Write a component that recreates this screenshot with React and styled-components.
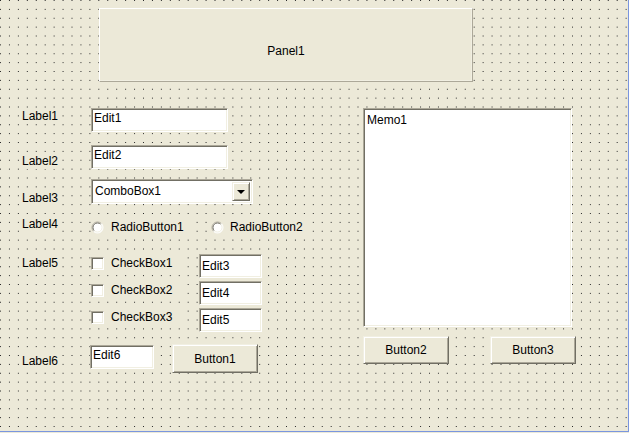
import React from "react";
import styled, { createGlobalStyle } from "styled-components";

const face = "#ECE9D8";
const light = "#F1EFE2";
const shadow = "#ACA899";
const darkShadow = "#716F64";

const GlobalStyle = createGlobalStyle`
  html, body {
    margin: 0;
    padding: 0;
    background: ${face};
  }
  body {
    font-family: "Liberation Sans", Arial, sans-serif;
    font-size: 12px;
    color: #000;
  }
`;

// design surface of the form, with the designer's dot grid
const Form = styled.div`
  display: flex;
  flex-direction: column;
  box-sizing: border-box;
  width: 629px;
  height: 432px;
  padding-top: 8px;
  border-right: 1px solid #7a96df;
  border-bottom: 1px solid #7a96df;
  background-color: ${face};
  background-image: radial-gradient(circle, #2a2a2a 0 0.55px, transparent 0.95px);
  background-size: 8.94px 8.88px;
  background-position: -3.97px -3.94px;
  overflow: hidden;
`;

const Panel = styled.div`
  display: flex;
  align-items: center;
  justify-content: center;
  box-sizing: border-box;
  width: 374px;
  height: 74px;
  margin-left: 99px;
  padding-top: 12px;
  background: ${face};
  border: 1px solid;
  border-color: #fff ${shadow} ${shadow} #fff;
  box-shadow: inset -1px -1px ${light};
`;

const Body = styled.div`
  display: flex;
  margin-top: 26px;
`;

const LeftColumn = styled.div`
  display: flex;
  flex-direction: column;
  width: 363px;
`;

const RightColumn = styled.div`
  display: flex;
  flex-direction: column;
  gap: 9px;
`;

const FieldRow = styled.div`
  display: grid;
  grid-template-columns: 91px auto;
  align-items: start;
  margin-top: ${p => p.$gap || 0}px;
`;

const Label = styled.span`
  justify-self: start;
  margin: ${p => p.$offset || 0}px 0 0 22px;
  background: ${face};
  line-height: 15px;
  white-space: nowrap;
`;

const Edit = styled.div`
  box-sizing: border-box;
  width: ${p => p.$w}px;
  height: 24px;
  padding: ${p => p.$pad ?? 2}px 1px 0 2px;
  background: #fff;
  border: 1px solid;
  border-color: ${shadow} #fff #fff ${shadow};
  box-shadow: inset 1px 1px ${darkShadow}, inset -1px -1px ${light};
  line-height: 15px;
  white-space: nowrap;
  overflow: hidden;
`;

const Memo = styled(Edit)`
  width: 209px;
  height: 219px;
  padding: 4px 3px;
`;

const Combo = styled(Edit)`
  display: flex;
  justify-content: space-between;
  height: 25px;
  padding: 2px 2px 2px 3px;
  line-height: 19px;
`;

const DropButton = styled.div`
  width: 18px;
  box-sizing: border-box;
  display: flex;
  align-items: center;
  justify-content: center;
  background: ${face};
  border: 1px solid;
  border-color: ${light} ${darkShadow} ${darkShadow} ${light};
  box-shadow: inset 1px 1px #fff, inset -1px -1px ${shadow};

  &::after {
    content: "";
    border-left: 4px solid transparent;
    border-right: 4px solid transparent;
    border-top: 4px solid #000;
    margin-top: 1px;
  }
`;

const Button = styled.div`
  display: flex;
  align-items: center;
  justify-content: center;
  box-sizing: border-box;
  width: 86px;
  height: ${p => p.$h || 28}px;
  background: ${face};
  border: 1px solid;
  border-color: ${light} ${darkShadow} ${darkShadow} ${light};
  box-shadow: inset 1px 1px #fff, inset -1px -1px ${shadow};
`;

const ButtonRow = styled.div`
  display: flex;
  gap: 41px;
`;

const RadioGroup = styled.div`
  display: grid;
  grid-template-columns: 120px auto;
  margin-top: 3px;
`;

const Choice = styled.div`
  display: flex;
  align-items: center;
  gap: ${p => p.$gap || 7}px;
  height: 15px;
  justify-self: start;
  padding-right: 8px;
  background: ${face};
  line-height: 15px;
  white-space: nowrap;
`;

const CheckGrid = styled.div`
  display: grid;
  grid-template-columns: 108px 63px;
  grid-auto-rows: 24px;
  row-gap: 3px;
  align-items: start;
`;

const CheckChoice = styled(Choice)`
  margin-top: 2px;
`;

const Box = styled.span`
  width: 13px;
  height: 13px;
  box-sizing: border-box;
  flex: none;
  background: #fff;
  border: 1px solid;
  border-color: ${shadow} #fff #fff ${shadow};
  box-shadow: inset 1px 1px ${darkShadow}, inset -1px -1px ${light};
`;

const BottomControls = styled.div`
  display: flex;
  align-items: flex-start;
  gap: 18px;

  & > ${Edit} {
    margin: 1px 0 0 -1px;
  }
`;

function RadioCircle() {
  return (
    <svg width="13" height="13" viewBox="0 0 13 13" style={{ flex: "none" }}>
      <circle cx="6.5" cy="6.5" r="5.5" fill="#fff" />
      <path d="M2.6 10.4 A5.5 5.5 0 0 1 10.4 2.6" fill="none" stroke={shadow} />
      <path d="M3.3 9.7 A4.5 4.5 0 0 1 9.7 3.3" fill="none" stroke={darkShadow} />
      <path d="M10.4 2.6 A5.5 5.5 0 0 1 2.6 10.4" fill="none" stroke="#fff" />
      <path d="M9.7 3.3 A4.5 4.5 0 0 1 3.3 9.7" fill="none" stroke={light} />
    </svg>
  );
}

const checks = [
  ["CheckBox1", "Edit3"],
  ["CheckBox2", "Edit4"],
  ["CheckBox3", "Edit5"]
];

export default function App() {
  return (
    <>
      <GlobalStyle />
      <Form>
        <Panel>Panel1</Panel>

        <Body>
          <LeftColumn>
            <FieldRow>
              <Label $offset={1}>Label1</Label>
              <Edit $w={137}>Edit1</Edit>
            </FieldRow>

            <FieldRow $gap={13}>
              <Label $offset={9}>Label2</Label>
              <Edit $w={137}>Edit2</Edit>
            </FieldRow>

            <FieldRow $gap={10}>
              <Label $offset={12}>Label3</Label>
              <Combo $w={162}>
                ComboBox1
                <DropButton />
              </Combo>
            </FieldRow>

            <FieldRow $gap={11}>
              <Label>Label4</Label>
              <RadioGroup>
                <Choice>
                  <RadioCircle />
                  RadioButton1
                </Choice>
                <Choice $gap={6}>
                  <RadioCircle />
                  RadioButton2
                </Choice>
              </RadioGroup>
            </FieldRow>

            <FieldRow $gap={19}>
              <Label $offset={2}>Label5</Label>
              <CheckGrid>
                {checks.map(([check, edit]) => (
                  <React.Fragment key={check}>
                    <CheckChoice>
                      <Box />
                      {check}
                    </CheckChoice>
                    <Edit $w={63} $pad={4}>
                      {edit}
                    </Edit>
                  </React.Fragment>
                ))}
              </CheckGrid>
            </FieldRow>

            <FieldRow $gap={12}>
              <Label $offset={10}>Label6</Label>
              <BottomControls>
                <Edit $w={64}>Edit6</Edit>
                <Button $h={29}>Button1</Button>
              </BottomControls>
            </FieldRow>
          </LeftColumn>

          <RightColumn>
            <Memo>Memo1</Memo>
            <ButtonRow>
              <Button>Button2</Button>
              <Button>Button3</Button>
            </ButtonRow>
          </RightColumn>
        </Body>
      </Form>
    </>
  );
}
